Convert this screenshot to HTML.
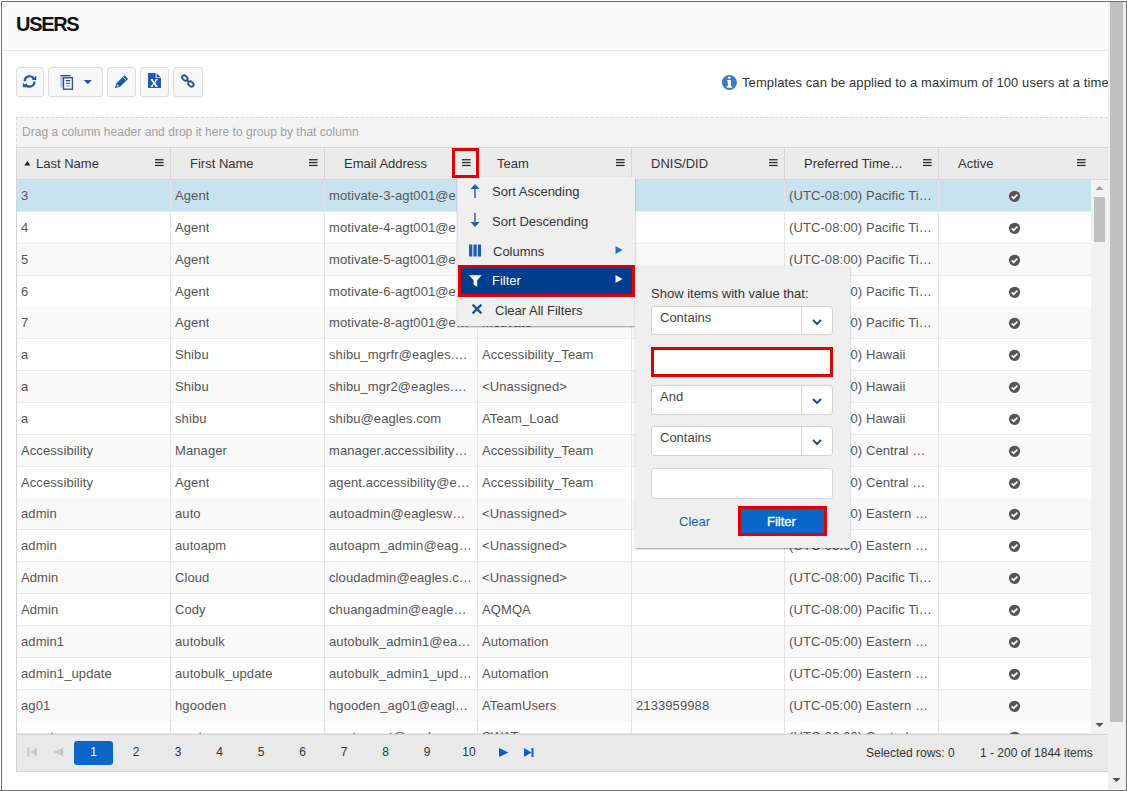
<!DOCTYPE html><html><head><meta charset="utf-8"><style>
*{box-sizing:border-box;margin:0;padding:0}
html,body{width:1127px;height:791px;overflow:hidden;background:#fff;font-family:"Liberation Sans",sans-serif;}
.a{position:absolute}
.t{position:absolute;white-space:nowrap;line-height:13px;font-size:13px}
.ck,.hm{position:absolute}
</style></head><body>

<div class="a" style="left:0;top:0;width:1127px;height:791px;background:#fff"></div>
<div class="a" style="left:2px;top:2px;width:1106px;height:49px;background:#fafafa;border-bottom:1px solid #e6e6e6"></div>
<div class="t" style="left:16px;top:14px;font-size:20px;line-height:20px;font-weight:bold;color:#111;letter-spacing:-1.3px">USERS</div>
<div class="a" style="left:16px;top:67px;width:28px;height:30px;background:#f7f7f7;border:1px solid #dcdcdc;border-radius:3px"></div>
<div class="a" style="left:48px;top:67px;width:55px;height:30px;background:#f7f7f7;border:1px solid #dcdcdc;border-radius:3px"></div>
<div class="a" style="left:107px;top:67px;width:29px;height:30px;background:#f7f7f7;border:1px solid #dcdcdc;border-radius:3px"></div>
<div class="a" style="left:140px;top:67px;width:29px;height:30px;background:#f7f7f7;border:1px solid #dcdcdc;border-radius:3px"></div>
<div class="a" style="left:173px;top:67px;width:30px;height:30px;background:#f7f7f7;border:1px solid #dcdcdc;border-radius:3px"></div>
<svg class="a" style="left:0;top:0" width="1127" height="120" viewBox="0 0 1127 120"><path d="M24.7 81.2 A4.9 4.9 0 0 1 33.93 78.9" stroke="#1e5aa8" stroke-width="2.2" fill="none"/><path d="M36.3 75.4 V79.9 H31.8 Z" fill="#1e5aa8"/><path d="M34.5 81.6 A4.9 4.9 0 0 1 25.27 83.9" stroke="#1e5aa8" stroke-width="2.2" fill="none"/><path d="M22.9 82.7 V87.2 H27.4 Z" fill="#1e5aa8"/><rect x="60.3" y="75.2" width="10.2" height="12.4" fill="#b9c5e6"/><rect x="60.3" y="75" width="10.4" height="1.1" fill="#2e4a8a"/><rect x="63.5" y="77.8" width="8.9" height="11.4" fill="#fff" stroke="#3a4d8c" stroke-width="1.4"/><path d="M65.8 80.6 H70.2 M65.8 83.3 H70.2" stroke="#2e3f7a" stroke-width="1.1"/><path d="M65.8 86 H70.2" stroke="#8a9ac0" stroke-width="1.1"/><path d="M83.7 79.9 H91.9 L87.8 84.2 Z" fill="#1e5aa8"/><path d="M124.5 75.3 L128.2 79 L119.73 87.07 L115 88 L116.23 83.57 Z" fill="#1e5aa8"/><path d="M122.9 76.9 L126.5 80.5" stroke="#d8e6f7" stroke-width="0.8"/><path d="M116.9 84.9 L118.6 86.6" stroke="#e6f0fb" stroke-width="1.2"/><path d="M148 73 H155.6 V77.7 H161 V88 H148 Z" fill="#1b5fb5"/><path d="M156.6 73.6 L160.4 77 H156.6 Z" fill="#2a4a80"/><path d="M151.7 79.7 L156.7 86.3" stroke="#fff" stroke-width="1.7"/><path d="M156.7 79.7 L151.7 86.3" stroke="#fff" stroke-width="1.2"/><path d="M150.7 79.5 H153 M155.4 79.5 H157.6 M150.7 86.5 H153 M155.4 86.5 H157.6" stroke="#fff" stroke-width="0.9"/><rect x="181.8" y="75.9" width="6" height="4.2" rx="2.1" transform="rotate(45 184.8 78)" stroke="#2c4f8f" stroke-width="1.9" fill="none"/><rect x="187.9" y="81.9" width="6" height="4.2" rx="2.1" transform="rotate(45 190.9 84)" stroke="#2c4f8f" stroke-width="1.9" fill="none"/><path d="M186.9 80.1 L188.8 81.9" stroke="#2c4f8f" stroke-width="1.9"/><circle cx="729.4" cy="82.5" r="7.5" fill="#3b7bc2"/><circle cx="729.3" cy="77.7" r="1.3" fill="#fff"/><path d="M727.2 79.9 H730.9 V86.2 H732 V87.7 H726.7 V86.2 H727.8 V81.3 H727.2 Z" fill="#fff"/></svg>
<div class="t" style="left:742px;top:76px;color:#333;letter-spacing:0.09px">Templates can be applied to a maximum of 100 users at a time</div>
<div class="a" style="left:16px;top:117px;width:1092px;height:655px;border-left:1px solid #d5d5d5"></div>
<div class="a" style="left:16px;top:117px;width:1092px;height:30px;background:#f3f3f3;border-top:1px dashed #d9d9d9;border-left:1px dashed #d9d9d9"></div>
<div class="t" style="left:22px;top:126px;font-size:12px;line-height:12px;color:#a0a0a0;letter-spacing:0.03px">Drag a column header and drop it here to group by that column</div>
<div class="a" style="left:16px;top:147px;width:1092px;height:33px;background:#ebebeb;border-top:1px solid #d6d6d6;border-bottom:1px solid #d6d6d6;border-left:1px solid #d6d6d6"></div>
<div class="t" style="left:36px;top:157px;color:#333">Last Name</div>
<svg class="hm" style="left:154.8px;top:159px" width="9" height="8" viewBox="0 0 9 8"><rect x="0" y="0.1" width="8.6" height="1.3" fill="#2a2a2a"/><rect x="0" y="2.9" width="8.6" height="1.3" fill="#2a2a2a"/><rect x="0" y="5.8" width="8.6" height="1.3" fill="#2a2a2a"/></svg>
<div class="a" style="left:170px;top:148px;width:1px;height:31px;background:#d6d6d6"></div>
<div class="t" style="left:190px;top:157px;color:#333">First Name</div>
<svg class="hm" style="left:308.8px;top:159px" width="9" height="8" viewBox="0 0 9 8"><rect x="0" y="0.1" width="8.6" height="1.3" fill="#2a2a2a"/><rect x="0" y="2.9" width="8.6" height="1.3" fill="#2a2a2a"/><rect x="0" y="5.8" width="8.6" height="1.3" fill="#2a2a2a"/></svg>
<div class="a" style="left:324px;top:148px;width:1px;height:31px;background:#d6d6d6"></div>
<div class="t" style="left:344px;top:157px;color:#333">Email Address</div>
<svg class="hm" style="left:461.8px;top:159px" width="9" height="8" viewBox="0 0 9 8"><rect x="0" y="0.1" width="8.6" height="1.3" fill="#2a2a2a"/><rect x="0" y="2.9" width="8.6" height="1.3" fill="#2a2a2a"/><rect x="0" y="5.8" width="8.6" height="1.3" fill="#2a2a2a"/></svg>
<div class="a" style="left:477px;top:148px;width:1px;height:31px;background:#d6d6d6"></div>
<div class="t" style="left:497px;top:157px;color:#333">Team</div>
<svg class="hm" style="left:615.8px;top:159px" width="9" height="8" viewBox="0 0 9 8"><rect x="0" y="0.1" width="8.6" height="1.3" fill="#2a2a2a"/><rect x="0" y="2.9" width="8.6" height="1.3" fill="#2a2a2a"/><rect x="0" y="5.8" width="8.6" height="1.3" fill="#2a2a2a"/></svg>
<div class="a" style="left:631px;top:148px;width:1px;height:31px;background:#d6d6d6"></div>
<div class="t" style="left:651px;top:157px;color:#333">DNIS/DID</div>
<svg class="hm" style="left:768.8px;top:159px" width="9" height="8" viewBox="0 0 9 8"><rect x="0" y="0.1" width="8.6" height="1.3" fill="#2a2a2a"/><rect x="0" y="2.9" width="8.6" height="1.3" fill="#2a2a2a"/><rect x="0" y="5.8" width="8.6" height="1.3" fill="#2a2a2a"/></svg>
<div class="a" style="left:784px;top:148px;width:1px;height:31px;background:#d6d6d6"></div>
<div class="t" style="left:804px;top:157px;color:#333">Preferred Time…</div>
<svg class="hm" style="left:922.8px;top:159px" width="9" height="8" viewBox="0 0 9 8"><rect x="0" y="0.1" width="8.6" height="1.3" fill="#2a2a2a"/><rect x="0" y="2.9" width="8.6" height="1.3" fill="#2a2a2a"/><rect x="0" y="5.8" width="8.6" height="1.3" fill="#2a2a2a"/></svg>
<div class="a" style="left:938px;top:148px;width:1px;height:31px;background:#d6d6d6"></div>
<div class="t" style="left:958px;top:157px;color:#333">Active</div>
<svg class="hm" style="left:1076.5px;top:159px" width="9" height="8" viewBox="0 0 9 8"><rect x="0" y="0.1" width="8.6" height="1.3" fill="#2a2a2a"/><rect x="0" y="2.9" width="8.6" height="1.3" fill="#2a2a2a"/><rect x="0" y="5.8" width="8.6" height="1.3" fill="#2a2a2a"/></svg>
<svg class="a" style="left:24px;top:160px" width="8" height="6" viewBox="0 0 8 6"><path d="M0.3 5.6 L3.3 1 L6.3 5.6 Z" fill="#222"/></svg>
<div class="a" style="left:17px;top:180px;width:1074px;height:32px;background:#c8e3ee;border-bottom:1px solid #eaeaea"></div>
<div class="a" style="left:170px;top:180px;width:1px;height:32px;background:#e4e4e4"></div>
<div class="a" style="left:324px;top:180px;width:1px;height:32px;background:#e4e4e4"></div>
<div class="a" style="left:477px;top:180px;width:1px;height:32px;background:#e4e4e4"></div>
<div class="a" style="left:631px;top:180px;width:1px;height:32px;background:#e4e4e4"></div>
<div class="a" style="left:784px;top:180px;width:1px;height:32px;background:#e4e4e4"></div>
<div class="a" style="left:938px;top:180px;width:1px;height:32px;background:#e4e4e4"></div>
<div class="t" style="left:21px;top:189px;color:#555;letter-spacing:0.09px;height:20px;overflow:hidden">3</div>
<div class="t" style="left:175px;top:189px;color:#555;letter-spacing:0.09px;height:20px;overflow:hidden">Agent</div>
<div class="t" style="left:329px;top:189px;color:#555;letter-spacing:0.09px;height:20px;overflow:hidden">motivate-3-agt001@e…</div>
<div class="t" style="left:789px;top:189px;color:#555;letter-spacing:0.09px;height:20px;overflow:hidden">(UTC-08:00) Pacific Ti…</div>
<svg class="ck" style="left:1008px;top:190px" width="13" height="13" viewBox="0 0 13 13"><circle cx="6.5" cy="6.3" r="5.6" fill="#555"/><path d="M3.7 6.4 L5.7 8.3 L9.3 4.6" stroke="#fff" stroke-width="1.8" fill="none"/></svg>
<div class="a" style="left:17px;top:212px;width:1074px;height:32px;background:#ffffff;border-bottom:1px solid #eaeaea"></div>
<div class="a" style="left:170px;top:212px;width:1px;height:32px;background:#e4e4e4"></div>
<div class="a" style="left:324px;top:212px;width:1px;height:32px;background:#e4e4e4"></div>
<div class="a" style="left:477px;top:212px;width:1px;height:32px;background:#e4e4e4"></div>
<div class="a" style="left:631px;top:212px;width:1px;height:32px;background:#e4e4e4"></div>
<div class="a" style="left:784px;top:212px;width:1px;height:32px;background:#e4e4e4"></div>
<div class="a" style="left:938px;top:212px;width:1px;height:32px;background:#e4e4e4"></div>
<div class="t" style="left:21px;top:221px;color:#555;letter-spacing:0.09px;height:20px;overflow:hidden">4</div>
<div class="t" style="left:175px;top:221px;color:#555;letter-spacing:0.09px;height:20px;overflow:hidden">Agent</div>
<div class="t" style="left:329px;top:221px;color:#555;letter-spacing:0.09px;height:20px;overflow:hidden">motivate-4-agt001@e…</div>
<div class="t" style="left:789px;top:221px;color:#555;letter-spacing:0.09px;height:20px;overflow:hidden">(UTC-08:00) Pacific Ti…</div>
<svg class="ck" style="left:1008px;top:222px" width="13" height="13" viewBox="0 0 13 13"><circle cx="6.5" cy="6.3" r="5.6" fill="#555"/><path d="M3.7 6.4 L5.7 8.3 L9.3 4.6" stroke="#fff" stroke-width="1.8" fill="none"/></svg>
<div class="a" style="left:17px;top:244px;width:1074px;height:32px;background:#f9f9f9;border-bottom:1px solid #eaeaea"></div>
<div class="a" style="left:170px;top:244px;width:1px;height:32px;background:#e4e4e4"></div>
<div class="a" style="left:324px;top:244px;width:1px;height:32px;background:#e4e4e4"></div>
<div class="a" style="left:477px;top:244px;width:1px;height:32px;background:#e4e4e4"></div>
<div class="a" style="left:631px;top:244px;width:1px;height:32px;background:#e4e4e4"></div>
<div class="a" style="left:784px;top:244px;width:1px;height:32px;background:#e4e4e4"></div>
<div class="a" style="left:938px;top:244px;width:1px;height:32px;background:#e4e4e4"></div>
<div class="t" style="left:21px;top:253px;color:#555;letter-spacing:0.09px;height:20px;overflow:hidden">5</div>
<div class="t" style="left:175px;top:253px;color:#555;letter-spacing:0.09px;height:20px;overflow:hidden">Agent</div>
<div class="t" style="left:329px;top:253px;color:#555;letter-spacing:0.09px;height:20px;overflow:hidden">motivate-5-agt001@e…</div>
<div class="t" style="left:789px;top:253px;color:#555;letter-spacing:0.09px;height:20px;overflow:hidden">(UTC-08:00) Pacific Ti…</div>
<svg class="ck" style="left:1008px;top:254px" width="13" height="13" viewBox="0 0 13 13"><circle cx="6.5" cy="6.3" r="5.6" fill="#555"/><path d="M3.7 6.4 L5.7 8.3 L9.3 4.6" stroke="#fff" stroke-width="1.8" fill="none"/></svg>
<div class="a" style="left:17px;top:276px;width:1074px;height:32px;background:#ffffff;border-bottom:1px solid #eaeaea"></div>
<div class="a" style="left:170px;top:276px;width:1px;height:32px;background:#e4e4e4"></div>
<div class="a" style="left:324px;top:276px;width:1px;height:32px;background:#e4e4e4"></div>
<div class="a" style="left:477px;top:276px;width:1px;height:32px;background:#e4e4e4"></div>
<div class="a" style="left:631px;top:276px;width:1px;height:32px;background:#e4e4e4"></div>
<div class="a" style="left:784px;top:276px;width:1px;height:32px;background:#e4e4e4"></div>
<div class="a" style="left:938px;top:276px;width:1px;height:32px;background:#e4e4e4"></div>
<div class="t" style="left:21px;top:285px;color:#555;letter-spacing:0.09px;height:20px;overflow:hidden">6</div>
<div class="t" style="left:175px;top:285px;color:#555;letter-spacing:0.09px;height:20px;overflow:hidden">Agent</div>
<div class="t" style="left:329px;top:285px;color:#555;letter-spacing:0.09px;height:20px;overflow:hidden">motivate-6-agt001@e…</div>
<div class="t" style="left:789px;top:285px;color:#555;letter-spacing:0.09px;height:20px;overflow:hidden">(UTC-08:00) Pacific Ti…</div>
<svg class="ck" style="left:1008px;top:286px" width="13" height="13" viewBox="0 0 13 13"><circle cx="6.5" cy="6.3" r="5.6" fill="#555"/><path d="M3.7 6.4 L5.7 8.3 L9.3 4.6" stroke="#fff" stroke-width="1.8" fill="none"/></svg>
<div class="a" style="left:17px;top:307px;width:1074px;height:32px;background:#f9f9f9;border-bottom:1px solid #eaeaea"></div>
<div class="a" style="left:170px;top:307px;width:1px;height:32px;background:#e4e4e4"></div>
<div class="a" style="left:324px;top:307px;width:1px;height:32px;background:#e4e4e4"></div>
<div class="a" style="left:477px;top:307px;width:1px;height:32px;background:#e4e4e4"></div>
<div class="a" style="left:631px;top:307px;width:1px;height:32px;background:#e4e4e4"></div>
<div class="a" style="left:784px;top:307px;width:1px;height:32px;background:#e4e4e4"></div>
<div class="a" style="left:938px;top:307px;width:1px;height:32px;background:#e4e4e4"></div>
<div class="t" style="left:21px;top:316px;color:#555;letter-spacing:0.09px;height:20px;overflow:hidden">7</div>
<div class="t" style="left:175px;top:316px;color:#555;letter-spacing:0.09px;height:20px;overflow:hidden">Agent</div>
<div class="t" style="left:329px;top:316px;color:#555;letter-spacing:0.09px;height:20px;overflow:hidden">motivate-8-agt001@e…</div>
<div class="t" style="left:482px;top:316px;color:#555;letter-spacing:0.09px;height:20px;overflow:hidden">Motivate</div>
<div class="t" style="left:789px;top:316px;color:#555;letter-spacing:0.09px;height:20px;overflow:hidden">(UTC-08:00) Pacific Ti…</div>
<svg class="ck" style="left:1008px;top:317px" width="13" height="13" viewBox="0 0 13 13"><circle cx="6.5" cy="6.3" r="5.6" fill="#555"/><path d="M3.7 6.4 L5.7 8.3 L9.3 4.6" stroke="#fff" stroke-width="1.8" fill="none"/></svg>
<div class="a" style="left:17px;top:339px;width:1074px;height:32px;background:#ffffff;border-bottom:1px solid #eaeaea"></div>
<div class="a" style="left:170px;top:339px;width:1px;height:32px;background:#e4e4e4"></div>
<div class="a" style="left:324px;top:339px;width:1px;height:32px;background:#e4e4e4"></div>
<div class="a" style="left:477px;top:339px;width:1px;height:32px;background:#e4e4e4"></div>
<div class="a" style="left:631px;top:339px;width:1px;height:32px;background:#e4e4e4"></div>
<div class="a" style="left:784px;top:339px;width:1px;height:32px;background:#e4e4e4"></div>
<div class="a" style="left:938px;top:339px;width:1px;height:32px;background:#e4e4e4"></div>
<div class="t" style="left:21px;top:348px;color:#555;letter-spacing:0.09px;height:20px;overflow:hidden">a</div>
<div class="t" style="left:175px;top:348px;color:#555;letter-spacing:0.09px;height:20px;overflow:hidden">Shibu</div>
<div class="t" style="left:329px;top:348px;color:#555;letter-spacing:0.09px;height:20px;overflow:hidden">shibu_mgrfr@eagles.…</div>
<div class="t" style="left:482px;top:348px;color:#555;letter-spacing:0.09px;height:20px;overflow:hidden">Accessibility_Team</div>
<div class="t" style="left:789px;top:348px;color:#555;letter-spacing:0.09px;height:20px;overflow:hidden">(UTC-10:00) Hawaii</div>
<svg class="ck" style="left:1008px;top:349px" width="13" height="13" viewBox="0 0 13 13"><circle cx="6.5" cy="6.3" r="5.6" fill="#555"/><path d="M3.7 6.4 L5.7 8.3 L9.3 4.6" stroke="#fff" stroke-width="1.8" fill="none"/></svg>
<div class="a" style="left:17px;top:371px;width:1074px;height:32px;background:#f9f9f9;border-bottom:1px solid #eaeaea"></div>
<div class="a" style="left:170px;top:371px;width:1px;height:32px;background:#e4e4e4"></div>
<div class="a" style="left:324px;top:371px;width:1px;height:32px;background:#e4e4e4"></div>
<div class="a" style="left:477px;top:371px;width:1px;height:32px;background:#e4e4e4"></div>
<div class="a" style="left:631px;top:371px;width:1px;height:32px;background:#e4e4e4"></div>
<div class="a" style="left:784px;top:371px;width:1px;height:32px;background:#e4e4e4"></div>
<div class="a" style="left:938px;top:371px;width:1px;height:32px;background:#e4e4e4"></div>
<div class="t" style="left:21px;top:380px;color:#555;letter-spacing:0.09px;height:20px;overflow:hidden">a</div>
<div class="t" style="left:175px;top:380px;color:#555;letter-spacing:0.09px;height:20px;overflow:hidden">Shibu</div>
<div class="t" style="left:329px;top:380px;color:#555;letter-spacing:0.09px;height:20px;overflow:hidden">shibu_mgr2@eagles.…</div>
<div class="t" style="left:482px;top:380px;color:#555;letter-spacing:0.09px;height:20px;overflow:hidden">&lt;Unassigned&gt;</div>
<div class="t" style="left:789px;top:380px;color:#555;letter-spacing:0.09px;height:20px;overflow:hidden">(UTC-10:00) Hawaii</div>
<svg class="ck" style="left:1008px;top:381px" width="13" height="13" viewBox="0 0 13 13"><circle cx="6.5" cy="6.3" r="5.6" fill="#555"/><path d="M3.7 6.4 L5.7 8.3 L9.3 4.6" stroke="#fff" stroke-width="1.8" fill="none"/></svg>
<div class="a" style="left:17px;top:403px;width:1074px;height:32px;background:#ffffff;border-bottom:1px solid #eaeaea"></div>
<div class="a" style="left:170px;top:403px;width:1px;height:32px;background:#e4e4e4"></div>
<div class="a" style="left:324px;top:403px;width:1px;height:32px;background:#e4e4e4"></div>
<div class="a" style="left:477px;top:403px;width:1px;height:32px;background:#e4e4e4"></div>
<div class="a" style="left:631px;top:403px;width:1px;height:32px;background:#e4e4e4"></div>
<div class="a" style="left:784px;top:403px;width:1px;height:32px;background:#e4e4e4"></div>
<div class="a" style="left:938px;top:403px;width:1px;height:32px;background:#e4e4e4"></div>
<div class="t" style="left:21px;top:412px;color:#555;letter-spacing:0.09px;height:20px;overflow:hidden">a</div>
<div class="t" style="left:175px;top:412px;color:#555;letter-spacing:0.09px;height:20px;overflow:hidden">shibu</div>
<div class="t" style="left:329px;top:412px;color:#555;letter-spacing:0.09px;height:20px;overflow:hidden">shibu@eagles.com</div>
<div class="t" style="left:482px;top:412px;color:#555;letter-spacing:0.09px;height:20px;overflow:hidden">ATeam_Load</div>
<div class="t" style="left:789px;top:412px;color:#555;letter-spacing:0.09px;height:20px;overflow:hidden">(UTC-10:00) Hawaii</div>
<svg class="ck" style="left:1008px;top:413px" width="13" height="13" viewBox="0 0 13 13"><circle cx="6.5" cy="6.3" r="5.6" fill="#555"/><path d="M3.7 6.4 L5.7 8.3 L9.3 4.6" stroke="#fff" stroke-width="1.8" fill="none"/></svg>
<div class="a" style="left:17px;top:435px;width:1074px;height:32px;background:#f9f9f9;border-bottom:1px solid #eaeaea"></div>
<div class="a" style="left:170px;top:435px;width:1px;height:32px;background:#e4e4e4"></div>
<div class="a" style="left:324px;top:435px;width:1px;height:32px;background:#e4e4e4"></div>
<div class="a" style="left:477px;top:435px;width:1px;height:32px;background:#e4e4e4"></div>
<div class="a" style="left:631px;top:435px;width:1px;height:32px;background:#e4e4e4"></div>
<div class="a" style="left:784px;top:435px;width:1px;height:32px;background:#e4e4e4"></div>
<div class="a" style="left:938px;top:435px;width:1px;height:32px;background:#e4e4e4"></div>
<div class="t" style="left:21px;top:444px;color:#555;letter-spacing:0.09px;height:20px;overflow:hidden">Accessibility</div>
<div class="t" style="left:175px;top:444px;color:#555;letter-spacing:0.09px;height:20px;overflow:hidden">Manager</div>
<div class="t" style="left:329px;top:444px;color:#555;letter-spacing:0.09px;height:20px;overflow:hidden">manager.accessibility…</div>
<div class="t" style="left:482px;top:444px;color:#555;letter-spacing:0.09px;height:20px;overflow:hidden">Accessibility_Team</div>
<div class="t" style="left:789px;top:444px;color:#555;letter-spacing:0.09px;height:20px;overflow:hidden">(UTC-06:00) Central …</div>
<svg class="ck" style="left:1008px;top:445px" width="13" height="13" viewBox="0 0 13 13"><circle cx="6.5" cy="6.3" r="5.6" fill="#555"/><path d="M3.7 6.4 L5.7 8.3 L9.3 4.6" stroke="#fff" stroke-width="1.8" fill="none"/></svg>
<div class="a" style="left:17px;top:467px;width:1074px;height:32px;background:#ffffff;border-bottom:1px solid #eaeaea"></div>
<div class="a" style="left:170px;top:467px;width:1px;height:32px;background:#e4e4e4"></div>
<div class="a" style="left:324px;top:467px;width:1px;height:32px;background:#e4e4e4"></div>
<div class="a" style="left:477px;top:467px;width:1px;height:32px;background:#e4e4e4"></div>
<div class="a" style="left:631px;top:467px;width:1px;height:32px;background:#e4e4e4"></div>
<div class="a" style="left:784px;top:467px;width:1px;height:32px;background:#e4e4e4"></div>
<div class="a" style="left:938px;top:467px;width:1px;height:32px;background:#e4e4e4"></div>
<div class="t" style="left:21px;top:476px;color:#555;letter-spacing:0.09px;height:20px;overflow:hidden">Accessibility</div>
<div class="t" style="left:175px;top:476px;color:#555;letter-spacing:0.09px;height:20px;overflow:hidden">Agent</div>
<div class="t" style="left:329px;top:476px;color:#555;letter-spacing:0.09px;height:20px;overflow:hidden">agent.accessibility@e…</div>
<div class="t" style="left:482px;top:476px;color:#555;letter-spacing:0.09px;height:20px;overflow:hidden">Accessibility_Team</div>
<div class="t" style="left:789px;top:476px;color:#555;letter-spacing:0.09px;height:20px;overflow:hidden">(UTC-06:00) Central …</div>
<svg class="ck" style="left:1008px;top:477px" width="13" height="13" viewBox="0 0 13 13"><circle cx="6.5" cy="6.3" r="5.6" fill="#555"/><path d="M3.7 6.4 L5.7 8.3 L9.3 4.6" stroke="#fff" stroke-width="1.8" fill="none"/></svg>
<div class="a" style="left:17px;top:498px;width:1074px;height:32px;background:#f9f9f9;border-bottom:1px solid #eaeaea"></div>
<div class="a" style="left:170px;top:498px;width:1px;height:32px;background:#e4e4e4"></div>
<div class="a" style="left:324px;top:498px;width:1px;height:32px;background:#e4e4e4"></div>
<div class="a" style="left:477px;top:498px;width:1px;height:32px;background:#e4e4e4"></div>
<div class="a" style="left:631px;top:498px;width:1px;height:32px;background:#e4e4e4"></div>
<div class="a" style="left:784px;top:498px;width:1px;height:32px;background:#e4e4e4"></div>
<div class="a" style="left:938px;top:498px;width:1px;height:32px;background:#e4e4e4"></div>
<div class="t" style="left:21px;top:507px;color:#555;letter-spacing:0.09px;height:20px;overflow:hidden">admin</div>
<div class="t" style="left:175px;top:507px;color:#555;letter-spacing:0.09px;height:20px;overflow:hidden">auto</div>
<div class="t" style="left:329px;top:507px;color:#555;letter-spacing:0.09px;height:20px;overflow:hidden">autoadmin@eaglesw…</div>
<div class="t" style="left:482px;top:507px;color:#555;letter-spacing:0.09px;height:20px;overflow:hidden">&lt;Unassigned&gt;</div>
<div class="t" style="left:789px;top:507px;color:#555;letter-spacing:0.09px;height:20px;overflow:hidden">(UTC-05:00) Eastern …</div>
<svg class="ck" style="left:1008px;top:508px" width="13" height="13" viewBox="0 0 13 13"><circle cx="6.5" cy="6.3" r="5.6" fill="#555"/><path d="M3.7 6.4 L5.7 8.3 L9.3 4.6" stroke="#fff" stroke-width="1.8" fill="none"/></svg>
<div class="a" style="left:17px;top:530px;width:1074px;height:32px;background:#ffffff;border-bottom:1px solid #eaeaea"></div>
<div class="a" style="left:170px;top:530px;width:1px;height:32px;background:#e4e4e4"></div>
<div class="a" style="left:324px;top:530px;width:1px;height:32px;background:#e4e4e4"></div>
<div class="a" style="left:477px;top:530px;width:1px;height:32px;background:#e4e4e4"></div>
<div class="a" style="left:631px;top:530px;width:1px;height:32px;background:#e4e4e4"></div>
<div class="a" style="left:784px;top:530px;width:1px;height:32px;background:#e4e4e4"></div>
<div class="a" style="left:938px;top:530px;width:1px;height:32px;background:#e4e4e4"></div>
<div class="t" style="left:21px;top:539px;color:#555;letter-spacing:0.09px;height:20px;overflow:hidden">admin</div>
<div class="t" style="left:175px;top:539px;color:#555;letter-spacing:0.09px;height:20px;overflow:hidden">autoapm</div>
<div class="t" style="left:329px;top:539px;color:#555;letter-spacing:0.09px;height:20px;overflow:hidden">autoapm_admin@eag…</div>
<div class="t" style="left:482px;top:539px;color:#555;letter-spacing:0.09px;height:20px;overflow:hidden">&lt;Unassigned&gt;</div>
<div class="t" style="left:789px;top:539px;color:#555;letter-spacing:0.09px;height:20px;overflow:hidden">(UTC-05:00) Eastern …</div>
<svg class="ck" style="left:1008px;top:540px" width="13" height="13" viewBox="0 0 13 13"><circle cx="6.5" cy="6.3" r="5.6" fill="#555"/><path d="M3.7 6.4 L5.7 8.3 L9.3 4.6" stroke="#fff" stroke-width="1.8" fill="none"/></svg>
<div class="a" style="left:17px;top:562px;width:1074px;height:32px;background:#f9f9f9;border-bottom:1px solid #eaeaea"></div>
<div class="a" style="left:170px;top:562px;width:1px;height:32px;background:#e4e4e4"></div>
<div class="a" style="left:324px;top:562px;width:1px;height:32px;background:#e4e4e4"></div>
<div class="a" style="left:477px;top:562px;width:1px;height:32px;background:#e4e4e4"></div>
<div class="a" style="left:631px;top:562px;width:1px;height:32px;background:#e4e4e4"></div>
<div class="a" style="left:784px;top:562px;width:1px;height:32px;background:#e4e4e4"></div>
<div class="a" style="left:938px;top:562px;width:1px;height:32px;background:#e4e4e4"></div>
<div class="t" style="left:21px;top:571px;color:#555;letter-spacing:0.09px;height:20px;overflow:hidden">Admin</div>
<div class="t" style="left:175px;top:571px;color:#555;letter-spacing:0.09px;height:20px;overflow:hidden">Cloud</div>
<div class="t" style="left:329px;top:571px;color:#555;letter-spacing:0.09px;height:20px;overflow:hidden">cloudadmin@eagles.c…</div>
<div class="t" style="left:482px;top:571px;color:#555;letter-spacing:0.09px;height:20px;overflow:hidden">&lt;Unassigned&gt;</div>
<div class="t" style="left:789px;top:571px;color:#555;letter-spacing:0.09px;height:20px;overflow:hidden">(UTC-08:00) Pacific Ti…</div>
<svg class="ck" style="left:1008px;top:572px" width="13" height="13" viewBox="0 0 13 13"><circle cx="6.5" cy="6.3" r="5.6" fill="#555"/><path d="M3.7 6.4 L5.7 8.3 L9.3 4.6" stroke="#fff" stroke-width="1.8" fill="none"/></svg>
<div class="a" style="left:17px;top:594px;width:1074px;height:32px;background:#ffffff;border-bottom:1px solid #eaeaea"></div>
<div class="a" style="left:170px;top:594px;width:1px;height:32px;background:#e4e4e4"></div>
<div class="a" style="left:324px;top:594px;width:1px;height:32px;background:#e4e4e4"></div>
<div class="a" style="left:477px;top:594px;width:1px;height:32px;background:#e4e4e4"></div>
<div class="a" style="left:631px;top:594px;width:1px;height:32px;background:#e4e4e4"></div>
<div class="a" style="left:784px;top:594px;width:1px;height:32px;background:#e4e4e4"></div>
<div class="a" style="left:938px;top:594px;width:1px;height:32px;background:#e4e4e4"></div>
<div class="t" style="left:21px;top:603px;color:#555;letter-spacing:0.09px;height:20px;overflow:hidden">Admin</div>
<div class="t" style="left:175px;top:603px;color:#555;letter-spacing:0.09px;height:20px;overflow:hidden">Cody</div>
<div class="t" style="left:329px;top:603px;color:#555;letter-spacing:0.09px;height:20px;overflow:hidden">chuangadmin@eagle…</div>
<div class="t" style="left:482px;top:603px;color:#555;letter-spacing:0.09px;height:20px;overflow:hidden">AQMQA</div>
<div class="t" style="left:789px;top:603px;color:#555;letter-spacing:0.09px;height:20px;overflow:hidden">(UTC-08:00) Pacific Ti…</div>
<svg class="ck" style="left:1008px;top:604px" width="13" height="13" viewBox="0 0 13 13"><circle cx="6.5" cy="6.3" r="5.6" fill="#555"/><path d="M3.7 6.4 L5.7 8.3 L9.3 4.6" stroke="#fff" stroke-width="1.8" fill="none"/></svg>
<div class="a" style="left:17px;top:626px;width:1074px;height:32px;background:#f9f9f9;border-bottom:1px solid #eaeaea"></div>
<div class="a" style="left:170px;top:626px;width:1px;height:32px;background:#e4e4e4"></div>
<div class="a" style="left:324px;top:626px;width:1px;height:32px;background:#e4e4e4"></div>
<div class="a" style="left:477px;top:626px;width:1px;height:32px;background:#e4e4e4"></div>
<div class="a" style="left:631px;top:626px;width:1px;height:32px;background:#e4e4e4"></div>
<div class="a" style="left:784px;top:626px;width:1px;height:32px;background:#e4e4e4"></div>
<div class="a" style="left:938px;top:626px;width:1px;height:32px;background:#e4e4e4"></div>
<div class="t" style="left:21px;top:635px;color:#555;letter-spacing:0.09px;height:20px;overflow:hidden">admin1</div>
<div class="t" style="left:175px;top:635px;color:#555;letter-spacing:0.09px;height:20px;overflow:hidden">autobulk</div>
<div class="t" style="left:329px;top:635px;color:#555;letter-spacing:0.09px;height:20px;overflow:hidden">autobulk_admin1@ea…</div>
<div class="t" style="left:482px;top:635px;color:#555;letter-spacing:0.09px;height:20px;overflow:hidden">Automation</div>
<div class="t" style="left:789px;top:635px;color:#555;letter-spacing:0.09px;height:20px;overflow:hidden">(UTC-05:00) Eastern …</div>
<svg class="ck" style="left:1008px;top:636px" width="13" height="13" viewBox="0 0 13 13"><circle cx="6.5" cy="6.3" r="5.6" fill="#555"/><path d="M3.7 6.4 L5.7 8.3 L9.3 4.6" stroke="#fff" stroke-width="1.8" fill="none"/></svg>
<div class="a" style="left:17px;top:658px;width:1074px;height:32px;background:#ffffff;border-bottom:1px solid #eaeaea"></div>
<div class="a" style="left:170px;top:658px;width:1px;height:32px;background:#e4e4e4"></div>
<div class="a" style="left:324px;top:658px;width:1px;height:32px;background:#e4e4e4"></div>
<div class="a" style="left:477px;top:658px;width:1px;height:32px;background:#e4e4e4"></div>
<div class="a" style="left:631px;top:658px;width:1px;height:32px;background:#e4e4e4"></div>
<div class="a" style="left:784px;top:658px;width:1px;height:32px;background:#e4e4e4"></div>
<div class="a" style="left:938px;top:658px;width:1px;height:32px;background:#e4e4e4"></div>
<div class="t" style="left:21px;top:667px;color:#555;letter-spacing:0.09px;height:20px;overflow:hidden">admin1_update</div>
<div class="t" style="left:175px;top:667px;color:#555;letter-spacing:0.09px;height:20px;overflow:hidden">autobulk_update</div>
<div class="t" style="left:329px;top:667px;color:#555;letter-spacing:0.09px;height:20px;overflow:hidden">autobulk_admin1_upd…</div>
<div class="t" style="left:482px;top:667px;color:#555;letter-spacing:0.09px;height:20px;overflow:hidden">Automation</div>
<div class="t" style="left:789px;top:667px;color:#555;letter-spacing:0.09px;height:20px;overflow:hidden">(UTC-05:00) Eastern …</div>
<svg class="ck" style="left:1008px;top:668px" width="13" height="13" viewBox="0 0 13 13"><circle cx="6.5" cy="6.3" r="5.6" fill="#555"/><path d="M3.7 6.4 L5.7 8.3 L9.3 4.6" stroke="#fff" stroke-width="1.8" fill="none"/></svg>
<div class="a" style="left:17px;top:690px;width:1074px;height:32px;background:#f9f9f9;border-bottom:1px solid #eaeaea"></div>
<div class="a" style="left:170px;top:690px;width:1px;height:32px;background:#e4e4e4"></div>
<div class="a" style="left:324px;top:690px;width:1px;height:32px;background:#e4e4e4"></div>
<div class="a" style="left:477px;top:690px;width:1px;height:32px;background:#e4e4e4"></div>
<div class="a" style="left:631px;top:690px;width:1px;height:32px;background:#e4e4e4"></div>
<div class="a" style="left:784px;top:690px;width:1px;height:32px;background:#e4e4e4"></div>
<div class="a" style="left:938px;top:690px;width:1px;height:32px;background:#e4e4e4"></div>
<div class="t" style="left:21px;top:699px;color:#555;letter-spacing:0.09px;height:20px;overflow:hidden">ag01</div>
<div class="t" style="left:175px;top:699px;color:#555;letter-spacing:0.09px;height:20px;overflow:hidden">hgooden</div>
<div class="t" style="left:329px;top:699px;color:#555;letter-spacing:0.09px;height:20px;overflow:hidden">hgooden_ag01@eagl…</div>
<div class="t" style="left:482px;top:699px;color:#555;letter-spacing:0.09px;height:20px;overflow:hidden">ATeamUsers</div>
<div class="t" style="left:636px;top:699px;color:#555;letter-spacing:0.09px;height:20px;overflow:hidden">2133959988</div>
<div class="t" style="left:789px;top:699px;color:#555;letter-spacing:0.09px;height:20px;overflow:hidden">(UTC-05:00) Eastern …</div>
<svg class="ck" style="left:1008px;top:700px" width="13" height="13" viewBox="0 0 13 13"><circle cx="6.5" cy="6.3" r="5.6" fill="#555"/><path d="M3.7 6.4 L5.7 8.3 L9.3 4.6" stroke="#fff" stroke-width="1.8" fill="none"/></svg>
<div class="a" style="left:17px;top:721px;width:1074px;height:13px;background:#ffffff;border-bottom:1px solid #eaeaea"></div>
<div class="a" style="left:170px;top:721px;width:1px;height:13px;background:#e4e4e4"></div>
<div class="a" style="left:324px;top:721px;width:1px;height:13px;background:#e4e4e4"></div>
<div class="a" style="left:477px;top:721px;width:1px;height:13px;background:#e4e4e4"></div>
<div class="a" style="left:631px;top:721px;width:1px;height:13px;background:#e4e4e4"></div>
<div class="a" style="left:784px;top:721px;width:1px;height:13px;background:#e4e4e4"></div>
<div class="a" style="left:938px;top:721px;width:1px;height:13px;background:#e4e4e4"></div>
<div class="t" style="left:21px;top:730px;color:#555;letter-spacing:0.09px;height:4px;overflow:hidden">agent</div>
<div class="t" style="left:175px;top:730px;color:#555;letter-spacing:0.09px;height:4px;overflow:hidden">swat</div>
<div class="t" style="left:329px;top:730px;color:#555;letter-spacing:0.09px;height:4px;overflow:hidden">swat.agent@eagles.c…</div>
<div class="t" style="left:482px;top:730px;color:#555;letter-spacing:0.09px;height:4px;overflow:hidden">SWAT</div>
<div class="t" style="left:789px;top:730px;color:#555;letter-spacing:0.09px;height:4px;overflow:hidden">(UTC-06:00) Central …</div>
<svg class="ck" style="left:1008px;top:731px" width="13" height="13" viewBox="0 0 13 13"><circle cx="6.5" cy="6.3" r="5.6" fill="#555"/><path d="M3.7 6.4 L5.7 8.3 L9.3 4.6" stroke="#fff" stroke-width="1.8" fill="none"/></svg>
<div class="a" style="left:1091px;top:180px;width:17px;height:554px;background:#f1f1f1"></div>
<div class="a" style="left:1094px;top:197px;width:11px;height:45px;background:#c1c1c1"></div>
<svg class="a" style="left:1095px;top:185px" width="9" height="6" viewBox="0 0 9 6"><path d="M0.5 5 L4.5 1 L8.5 5 Z" fill="#a0a0a0"/></svg>
<svg class="a" style="left:1095px;top:722px" width="9" height="6" viewBox="0 0 9 6"><path d="M0.5 1 L4.5 5 L8.5 1 Z" fill="#505050"/></svg>
<div class="a" style="left:16px;top:734px;width:1092px;height:38px;background:#e9e9e9;border-top:1px solid #d3d3d3;border-bottom:1px solid #d3d3d3;border-left:1px solid #d3d3d3"></div>
<svg class="a" style="left:27px;top:747px" width="11" height="10" viewBox="0 0 11 10"><rect x="0.3" y="0.5" width="2" height="9" fill="#c6c6c6"/><path d="M3.5 5 L10 0.8 V9.2 Z" fill="#c6c6c6"/></svg>
<svg class="a" style="left:53px;top:747px" width="11" height="10" viewBox="0 0 11 10"><path d="M0.7 5 L10.3 0.5 V9.5 Z" fill="#c6c6c6"/></svg>
<div class="a" style="left:74px;top:741px;width:39px;height:24px;background:#0a66c8;border-radius:3px"></div>
<div class="t" style="left:73.5px;width:40px;text-align:center;top:746px;font-size:12px;line-height:12px;color:#fff">1</div>
<div class="t" style="left:116px;width:40px;text-align:center;top:746px;font-size:12px;line-height:12px;color:#333">2</div>
<div class="t" style="left:158px;width:40px;text-align:center;top:746px;font-size:12px;line-height:12px;color:#333">3</div>
<div class="t" style="left:199.5px;width:40px;text-align:center;top:746px;font-size:12px;line-height:12px;color:#333">4</div>
<div class="t" style="left:241px;width:40px;text-align:center;top:746px;font-size:12px;line-height:12px;color:#333">5</div>
<div class="t" style="left:282.5px;width:40px;text-align:center;top:746px;font-size:12px;line-height:12px;color:#333">6</div>
<div class="t" style="left:324px;width:40px;text-align:center;top:746px;font-size:12px;line-height:12px;color:#333">7</div>
<div class="t" style="left:365.5px;width:40px;text-align:center;top:746px;font-size:12px;line-height:12px;color:#333">8</div>
<div class="t" style="left:407px;width:40px;text-align:center;top:746px;font-size:12px;line-height:12px;color:#333">9</div>
<div class="t" style="left:449px;width:40px;text-align:center;top:746px;font-size:12px;line-height:12px;color:#333">10</div>
<svg class="a" style="left:499px;top:748px" width="10" height="9" viewBox="0 0 10 9"><path d="M0 0 L9.5 4.5 L0 9 Z" fill="#0a5fc0"/></svg>
<svg class="a" style="left:524px;top:748px" width="10" height="9" viewBox="0 0 10 9"><path d="M0 0 L7.5 4.5 L0 9 Z" fill="#0a5fc0"/><rect x="7.5" y="0" width="2" height="9" fill="#0a5fc0"/></svg>
<div class="t" style="left:866px;top:747px;font-size:12px;line-height:12px;color:#333">Selected rows: 0</div>
<div class="t" style="left:980px;top:747px;font-size:12px;line-height:12px;color:#333">1 - 200 of 1844 items</div>
<div class="a" style="left:1108px;top:2px;width:18px;height:787px;background:#f0f0f0"></div>
<div class="a" style="left:1110px;top:2px;width:13px;height:720px;background:#c1c1c1"></div>
<svg class="a" style="left:1112px;top:777px" width="9" height="6" viewBox="0 0 9 6"><path d="M0.5 1 L4.5 5 L8.5 1 Z" fill="#505050"/></svg>
<div class="a" style="left:1px;top:1px;width:1126px;height:790px;border:1px solid #6f6f6f;border-bottom:none"></div><div class="a" style="left:0;top:790px;width:1127px;height:1px;background:#6f6f6f"></div>
<div class="a" style="left:457px;top:177px;width:178px;height:149px;background:#efefef;border-left:1px solid #e2e2e2;box-shadow:0 1.5px 1.5px rgba(0,0,0,0.28),1px 0 2px rgba(0,0,0,0.08)"></div>
<div class="t" style="left:492px;top:185px;color:#333">Sort Ascending</div>
<div class="t" style="left:492px;top:215px;color:#333">Sort Descending</div>
<div class="t" style="left:493px;top:245px;color:#333">Columns</div>
<div class="a" style="left:461px;top:268px;width:171px;height:26px;background:#003f8f"></div>
<div class="t" style="left:492px;top:274px;color:#fff">Filter</div>
<div class="t" style="left:495px;top:304px;color:#333">Clear All Filters</div>
<svg class="a" style="left:470px;top:184px" width="10" height="15" viewBox="0 0 10 15"><path d="M5 0 L9.5 5 H0.5 Z" fill="#1b5fb5"/><rect x="4.1" y="4" width="1.8" height="10" fill="#5a7ab0"/></svg>
<svg class="a" style="left:470px;top:213px" width="10" height="15" viewBox="0 0 10 15"><path d="M5 14 L9.5 9 H0.5 Z" fill="#1b5fb5"/><rect x="4.1" y="0" width="1.8" height="10" fill="#5a7ab0"/></svg>
<svg class="a" style="left:469px;top:244px" width="13" height="13" viewBox="0 0 13 13"><rect x="0" y="0.5" width="3.3" height="12" fill="#1b5fb5"/><rect x="4.4" y="0.5" width="3.3" height="12" fill="#1b5fb5"/><rect x="8.8" y="0.5" width="3.3" height="12" fill="#1b5fb5"/></svg>
<svg class="a" style="left:469px;top:275px" width="13" height="12" viewBox="0 0 13 12"><path d="M0 0.2 H12.6 L8.2 5.2 V11.8 L4.6 9.8 V5.2 Z" fill="#fff"/></svg>
<svg class="a" style="left:471px;top:303px" width="12" height="12" viewBox="0 0 12 12"><path d="M1.6 1.6 L10.4 10.4 M10.4 1.6 L1.6 10.4" stroke="#1e4f99" stroke-width="2.2"/></svg>
<svg class="a" style="left:615px;top:246px" width="8" height="8" viewBox="0 0 8 8"><path d="M0.5 0 L7.5 4 L0.5 8 Z" fill="#1b73d0"/></svg>
<svg class="a" style="left:615px;top:275px" width="8" height="8" viewBox="0 0 8 8"><path d="M0.5 0 L7.5 4 L0.5 8 Z" fill="#fff"/></svg>
<div class="a" style="left:635px;top:266px;width:215px;height:282px;background:#efefef;box-shadow:0 1.5px 1.5px rgba(0,0,0,0.28),1px 0 2px rgba(0,0,0,0.08)"></div>
<div class="t" style="left:651px;top:287px;color:#333">Show items with value that:</div>
<div class="a" style="left:651px;top:306px;width:182px;height:29px;background:#fff;border:1px solid #d3d3d3;border-radius:3px"></div>
<div class="a" style="left:801px;top:307px;width:1px;height:27px;background:#d8d8d8"></div>
<div class="t" style="left:660px;top:311px;color:#444">Contains</div>
<svg class="a" style="left:812px;top:319px" width="10" height="6" viewBox="0 0 10 6"><path d="M1 1 L5 5 L9 1" stroke="#1f4e8c" stroke-width="2" fill="none"/></svg>
<div class="a" style="left:651px;top:347px;width:182px;height:30px;background:#fff;border:3px solid #e00000"></div>
<div class="a" style="left:651px;top:385px;width:182px;height:30px;background:#fff;border:1px solid #d3d3d3;border-radius:3px"></div>
<div class="a" style="left:801px;top:386px;width:1px;height:28px;background:#d8d8d8"></div>
<div class="t" style="left:660px;top:390px;color:#444">And</div>
<svg class="a" style="left:812px;top:398px" width="10" height="6" viewBox="0 0 10 6"><path d="M1 1 L5 5 L9 1" stroke="#1f4e8c" stroke-width="2" fill="none"/></svg>
<div class="a" style="left:651px;top:426px;width:182px;height:30px;background:#fff;border:1px solid #d3d3d3;border-radius:3px"></div>
<div class="a" style="left:801px;top:427px;width:1px;height:28px;background:#d8d8d8"></div>
<div class="t" style="left:660px;top:431px;color:#444">Contains</div>
<svg class="a" style="left:812px;top:439px" width="10" height="6" viewBox="0 0 10 6"><path d="M1 1 L5 5 L9 1" stroke="#1f4e8c" stroke-width="2" fill="none"/></svg>
<div class="a" style="left:651px;top:468px;width:182px;height:31px;background:#fff;border:1px solid #d8d8d8;border-radius:3px"></div>
<div class="t" style="left:679px;top:515px;color:#1a5aa8">Clear</div>
<div class="a" style="left:738px;top:506px;width:89px;height:30px;background:#0a66c8;border:3px solid #e00000"></div>
<div class="t" style="left:767px;top:515px;color:#fff;-webkit-text-stroke:0.3px #fff">Filter</div>
<div class="a" style="left:452px;top:148px;width:27px;height:30px;border:3px solid #e00000"></div>
<div class="a" style="left:458px;top:265px;width:177px;height:32px;border:3px solid #e00000"></div>
</body></html>
